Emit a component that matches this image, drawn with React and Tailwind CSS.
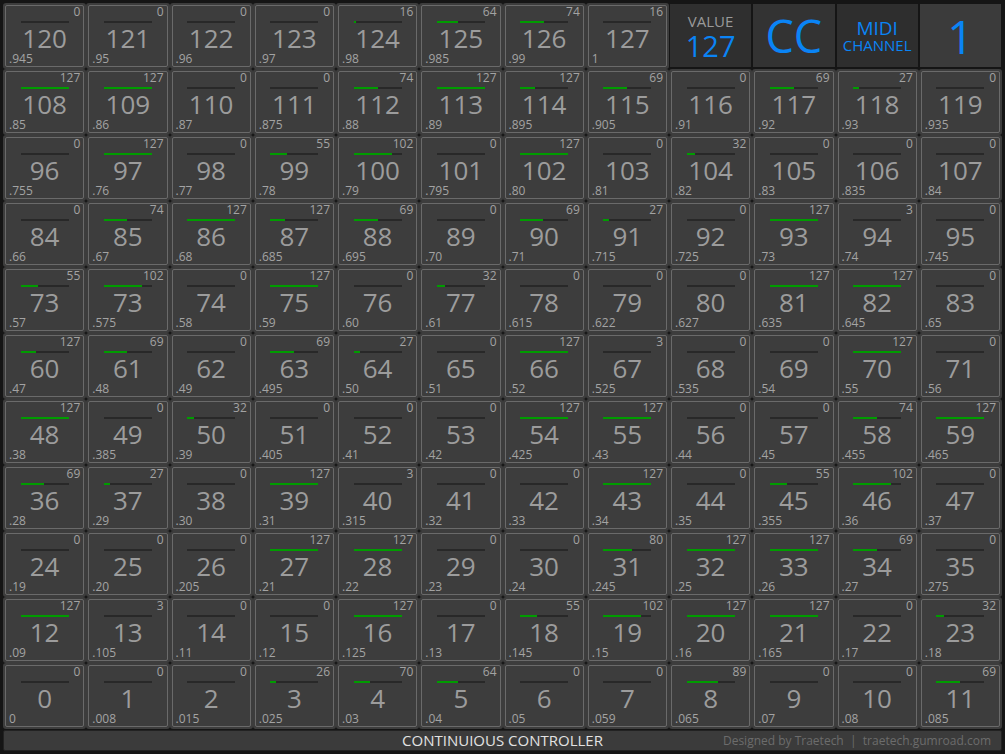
const font = { fontFamily: '"Open Sans", "Noto Sans", sans-serif' }

// [cc, value, label, bar fraction]
const rows = [
  [[120, 0, '.945'], [121, 0, '.95'], [122, 0, '.96'], [123, 0, '.97'], [124, 16, '.98', 0.05], [125, 64, '.985', 0.43], [126, 74, '.99', 0.49], [127, 16, '1', 0]],
  [[108, 127, '.85', 1], [109, 127, '.86', 1], [110, 0, '.87'], [111, 0, '.875'], [112, 74, '.88', 0.49], [113, 127, '.89', 1], [114, 127, '.895', 0.32], [115, 69, '.905', 0.49], [116, 0, '.91'], [117, 69, '.92', 0.49], [118, 27, '.93', 0.13], [119, 0, '.935']],
  [[96, 0, '.755'], [97, 127, '.76', 1], [98, 0, '.77'], [99, 55, '.78', 0.36], [100, 102, '.79', 0.79], [101, 0, '.795'], [102, 127, '.80', 1], [103, 0, '.81'], [104, 32, '.82', 0.16], [105, 0, '.83'], [106, 0, '.835'], [107, 0, '.84']],
  [[84, 0, '.66'], [85, 74, '.67', 0.48], [86, 127, '.68', 1], [87, 127, '.685', 0.32], [88, 69, '.695', 0.49], [89, 0, '.70'], [90, 69, '.71', 0.48], [91, 27, '.715', 0.13], [92, 0, '.725'], [93, 127, '.73', 1], [94, 3, '.74', 0], [95, 0, '.745']],
  [[73, 55, '.57', 0.35], [73, 102, '.575', 0.79], [74, 0, '.58'], [75, 127, '.59', 1], [76, 0, '.60'], [77, 32, '.61', 0.16], [78, 0, '.615'], [79, 0, '.622'], [80, 0, '.627'], [81, 127, '.635', 1], [82, 127, '.645', 1], [83, 0, '.65']],
  [[60, 127, '.47', 0.32], [61, 69, '.48', 0.48], [62, 0, '.49'], [63, 69, '.495', 0.49], [64, 27, '.50', 0.13], [65, 0, '.51'], [66, 127, '.52', 1], [67, 3, '.525', 0], [68, 0, '.535'], [69, 0, '.54'], [70, 127, '.55', 1], [71, 0, '.56']],
  [[48, 127, '.38', 1], [49, 0, '.385'], [50, 32, '.39', 0.15], [51, 0, '.405'], [52, 0, '.41'], [53, 0, '.42'], [54, 127, '.425', 1], [55, 127, '.43', 1], [56, 0, '.44'], [57, 0, '.45'], [58, 74, '.455', 0.49], [59, 127, '.465', 1]],
  [[36, 69, '.28', 0.48], [37, 27, '.29', 0.13], [38, 0, '.30'], [39, 127, '.31', 1], [40, 3, '.315', 0], [41, 0, '.32'], [42, 0, '.33'], [43, 127, '.34', 1], [44, 0, '.35'], [45, 55, '.355', 0.36], [46, 102, '.36', 0.79], [47, 0, '.37']],
  [[24, 0, '.19'], [25, 0, '.20'], [26, 0, '.205'], [27, 127, '.21', 1], [28, 127, '.22', 1], [29, 0, '.23'], [30, 0, '.24'], [31, 80, '.245', 0.6], [32, 127, '.25', 1], [33, 127, '.26', 1], [34, 69, '.27', 0.49], [35, 0, '.275']],
  [[12, 127, '.09', 1], [13, 3, '.105', 0], [14, 0, '.11'], [15, 0, '.12'], [16, 127, '.125', 1], [17, 0, '.13'], [18, 55, '.145', 0.36], [19, 102, '.15', 0.79], [20, 127, '.16', 1], [21, 127, '.165', 1], [22, 0, '.17'], [23, 32, '.18', 0.16]],
  [[0, 0, '0'], [1, 0, '.008'], [2, 0, '.015'], [3, 26, '.025', 0.12], [4, 70, '.03', 0.33], [5, 64, '.04', 0.44], [6, 0, '.05'], [7, 0, '.059'], [8, 89, '.065', 0.65], [9, 0, '.07'], [10, 0, '.08'], [11, 69, '.085', 0.49]],
]

function Knob({ cc, value, label, bar = 0 }) {
  return (
    <div className="rounded-[3px] bg-[#3d3d3d] p-[2px]">
      <div className="flex h-full flex-col rounded-[2px] border border-[#6a6a6a] text-[#9c9c9c]">
        <div className="h-[12px] pr-[3px] text-right text-[12px] leading-[12px] text-[#a3a3a3]">{value}</div>
        <div className="mx-auto mt-[3px] h-[2px] w-[48px] bg-[#282828]">
          <div className="h-full bg-[#009c00]" style={{ width: `${Math.round(bar * 48)}px` }} />
        </div>
        <div className="mt-[3px] text-center text-[26px] leading-[24px]">{cc}</div>
        <div className="mt-auto pb-[1px] pl-[3px] text-[12px] leading-[12px] text-[#a3a3a3]">{label}</div>
      </div>
    </div>
  )
}

function Panel({ bg, children }) {
  return (
    <div className="bg-[#151515] px-[1px] pb-[2px] pt-[1px]">
      <div className={`flex h-full flex-col items-center justify-center ${bg}`}>{children}</div>
    </div>
  )
}

export default function App() {
  return (
    <div className="flex h-[754px] w-[1005px] flex-col bg-[#151515] p-[3px]" style={font}>
      <div className="grid grid-cols-12 grid-rows-[repeat(11,66px)]">
        {rows.map((row, r) => row.map(([cc, value, label, bar], i) => (
          <Knob key={`${r}-${i}`} cc={cc} value={value} label={label} bar={bar} />
        )).concat(r === 0 ? [
          <Panel key="value" bg="bg-[#2f2f2f]">
            <div className="mb-[4px] text-[15px] leading-[16px] text-[#9a9a9a]">VALUE</div>
            <div className="text-[29px] leading-[26px] text-[#0a84f5]">127</div>
          </Panel>,
          <Panel key="cc" bg="bg-[#333333]">
            <div className="text-[45px] leading-none text-[#0a84f5]">CC</div>
          </Panel>,
          <Panel key="midi" bg="bg-[#2e2e2e]">
            <div className="mb-[1px] text-[19px] leading-[18px] text-[#0a84f5]">MIDI</div>
            <div className="text-[15px] leading-[14px] text-[#0a84f5]">CHANNEL</div>
          </Panel>,
          <Panel key="ch" bg="bg-[#3b3b3b]">
            <div className="text-[46px] leading-none text-[#0a84f5]">1</div>
          </Panel>,
        ] : []))}
      </div>

      <div className="mt-[1px] flex h-[22px] items-center rounded-[2px] border border-[#222] bg-[#3b3b3b] px-[10px]">
        <div className="flex-1" />
        <div className="text-[15px] leading-none text-[#e2e2e2]">CONTINUIOUS CONTROLLER</div>
        <div className="flex-1 text-right text-[12px] leading-none text-[#6c6c6c]">
          Designed by Traetech&nbsp; | &nbsp;traetech.gumroad.com
        </div>
      </div>
    </div>
  )
}
